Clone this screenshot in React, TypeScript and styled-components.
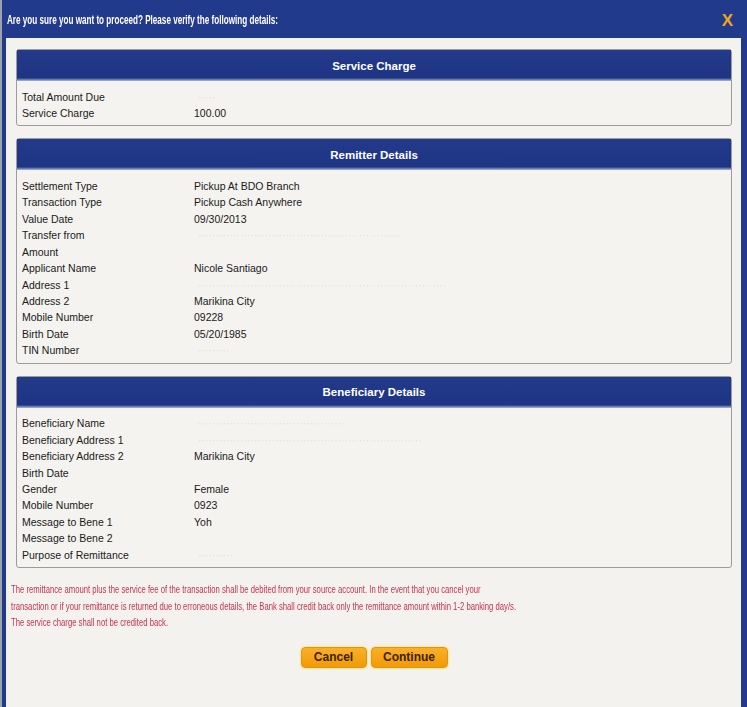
import React from "react";
import styled, { createGlobalStyle } from "styled-components";

const GlobalStyle = createGlobalStyle`
  html, body { margin: 0; padding: 0; }
  body { background: #9aa3ae; font-family: "Liberation Sans", Arial, sans-serif; }
`;

const Dialog = styled.div`
  margin-left: 2px;
  width: 745px;
  height: 707px;
  box-sizing: border-box;
  background: #223a8c;
  padding: 0 6px 0 4px;
  display: flex;
  flex-direction: column;
`;

const TitleBar = styled.div`
  height: 38px;
  display: flex;
  align-items: center;
  justify-content: space-between;
  padding: 2px 8px 0 0;
  box-sizing: border-box;
`;

const Title = styled.span`
  display: inline-block;
  font-family: "Liberation Sans", Arial, sans-serif;
  font-weight: bold;
  font-size: 12.5px;
  color: #ffffff;
  white-space: nowrap;
  transform: scaleX(0.65);
  transform-origin: left center;
  margin-left: 1px;
`;

const Close = styled.span`
  font-family: "Liberation Sans", Arial, sans-serif;
  font-weight: bold;
  font-size: 17px;
  color: #f2a623;
  line-height: 1;
`;

const Body = styled.div`
  flex: 1;
  background: #f3f2ee;
  padding: 11px 9px 0 10px;
  display: flex;
  flex-direction: column;
  gap: 12px;
`;

const Section = styled.div`
  border: 1px solid #9c9c9c;
  border-radius: 3px;
  background: #f4f3ef;
  padding-bottom: 4px;
`;

const SectionHeader = styled.div`
  height: 31px;
  background: linear-gradient(#23398a, #1e3584 90%, #a9bada);
  color: #ffffff;
  font-family: "Liberation Sans", Arial, sans-serif;
  font-weight: bold;
  font-size: 11.5px;
  display: flex;
  align-items: center;
  justify-content: center;
  margin-bottom: 7.5px;
`;

const Row = styled.div`
  display: grid;
  grid-template-columns: 172px 1fr;
  padding-left: 5px;
  height: 16.45px;
  line-height: 16.45px;
  font-size: 10.5px;
  color: #1a1a1a;
`;

const Value = styled.span<{ $hidden?: boolean }>`
  padding-left: ${(p) => (p.$hidden ? "4px" : "0")};
  color: ${(p) => (p.$hidden ? "#e2e0da" : "#1a1a1a")};
  filter: ${(p) => (p.$hidden ? "blur(0.7px)" : "none")};
`;

const Notice = styled.div`
  margin: 1px -5px 0 -5px;
  font-family: "Liberation Sans", Arial, sans-serif;
  font-size: 11px;
  line-height: 16.5px;
  color: #c8324f;
`;

const NoticeLine = styled.span`
  display: block;
  white-space: nowrap;
  transform: scaleX(0.7);
  transform-origin: left center;
`;

const Buttons = styled.div`
  display: flex;
  justify-content: center;
  gap: 4px;
  margin-top: 16px;
`;

const Button = styled.button<{ $w: number }>`
  width: ${(p) => p.$w}px;
  height: 21px;
  border: 1px solid #e39509;
  border-radius: 4px;
  background: linear-gradient(#f8b028, #f29a06);
  box-shadow: 0 0 2px 1px #f7e79a;
  color: #3d2204;
  font-family: "Liberation Sans", Arial, sans-serif;
  font-weight: bold;
  font-size: 12px;
  padding: 0;
`;

type R = [string, string, boolean?];

const service: R[] = [
  ["Total Amount Due", "·····", true],
  ["Service Charge", "100.00"],
];

const remitter: R[] = [
  ["Settlement Type", "Pickup At BDO Branch"],
  ["Transaction Type", "Pickup Cash Anywhere"],
  ["Value Date", "09/30/2013"],
  ["Transfer from", "··························································", true],
  ["Amount", "", true],
  ["Applicant Name", "Nicole Santiago"],
  ["Address 1", "·······································································", true],
  ["Address 2", "Marikina City"],
  ["Mobile Number", "09228"],
  ["Birth Date", "05/20/1985"],
  ["TIN Number", "·········", true],
];

const beneficiary: R[] = [
  ["Beneficiary Name", "··········································", true],
  ["Beneficiary Address 1", "································································", true],
  ["Beneficiary Address 2", "Marikina City"],
  ["Birth Date", "", true],
  ["Gender", "Female"],
  ["Mobile Number", "0923"],
  ["Message to Bene 1", "Yoh"],
  ["Message to Bene 2", ""],
  ["Purpose of Remittance", "··········", true],
];

const notice = [
  "The remittance amount plus the service fee of the transaction shall be debited from your source account. In the event that you cancel your",
  "transaction or if your remittance is returned due to erroneous details, the Bank shall credit back only the remittance amount within 1-2 banking day/s.",
  "The service charge shall not be credited back.",
];

const Block = ({ title, rows }: { title: string; rows: R[] }) => (
  <Section>
    <SectionHeader>{title}</SectionHeader>
    {rows.map(([l, v, h], i) => (
      <Row key={i}>
        <span>{l}</span>
        <Value $hidden={h}>{v}</Value>
      </Row>
    ))}
  </Section>
);

export default function App() {
  return (
    <>
      <GlobalStyle />
      <Dialog>
        <TitleBar>
          <Title>Are you sure you want to proceed? Please verify the following details:</Title>
          <Close>X</Close>
        </TitleBar>
        <Body>
          <Block title="Service Charge" rows={service} />
          <Block title="Remitter Details" rows={remitter} />
          <Block title="Beneficiary Details" rows={beneficiary} />
          <div>
            <Notice>
              {notice.map((t, i) => (
                <NoticeLine key={i}>{t}</NoticeLine>
              ))}
            </Notice>
            <Buttons>
              <Button $w={66}>Cancel</Button>
              <Button $w={77}>Continue</Button>
            </Buttons>
          </div>
        </Body>
      </Dialog>
    </>
  );
}
